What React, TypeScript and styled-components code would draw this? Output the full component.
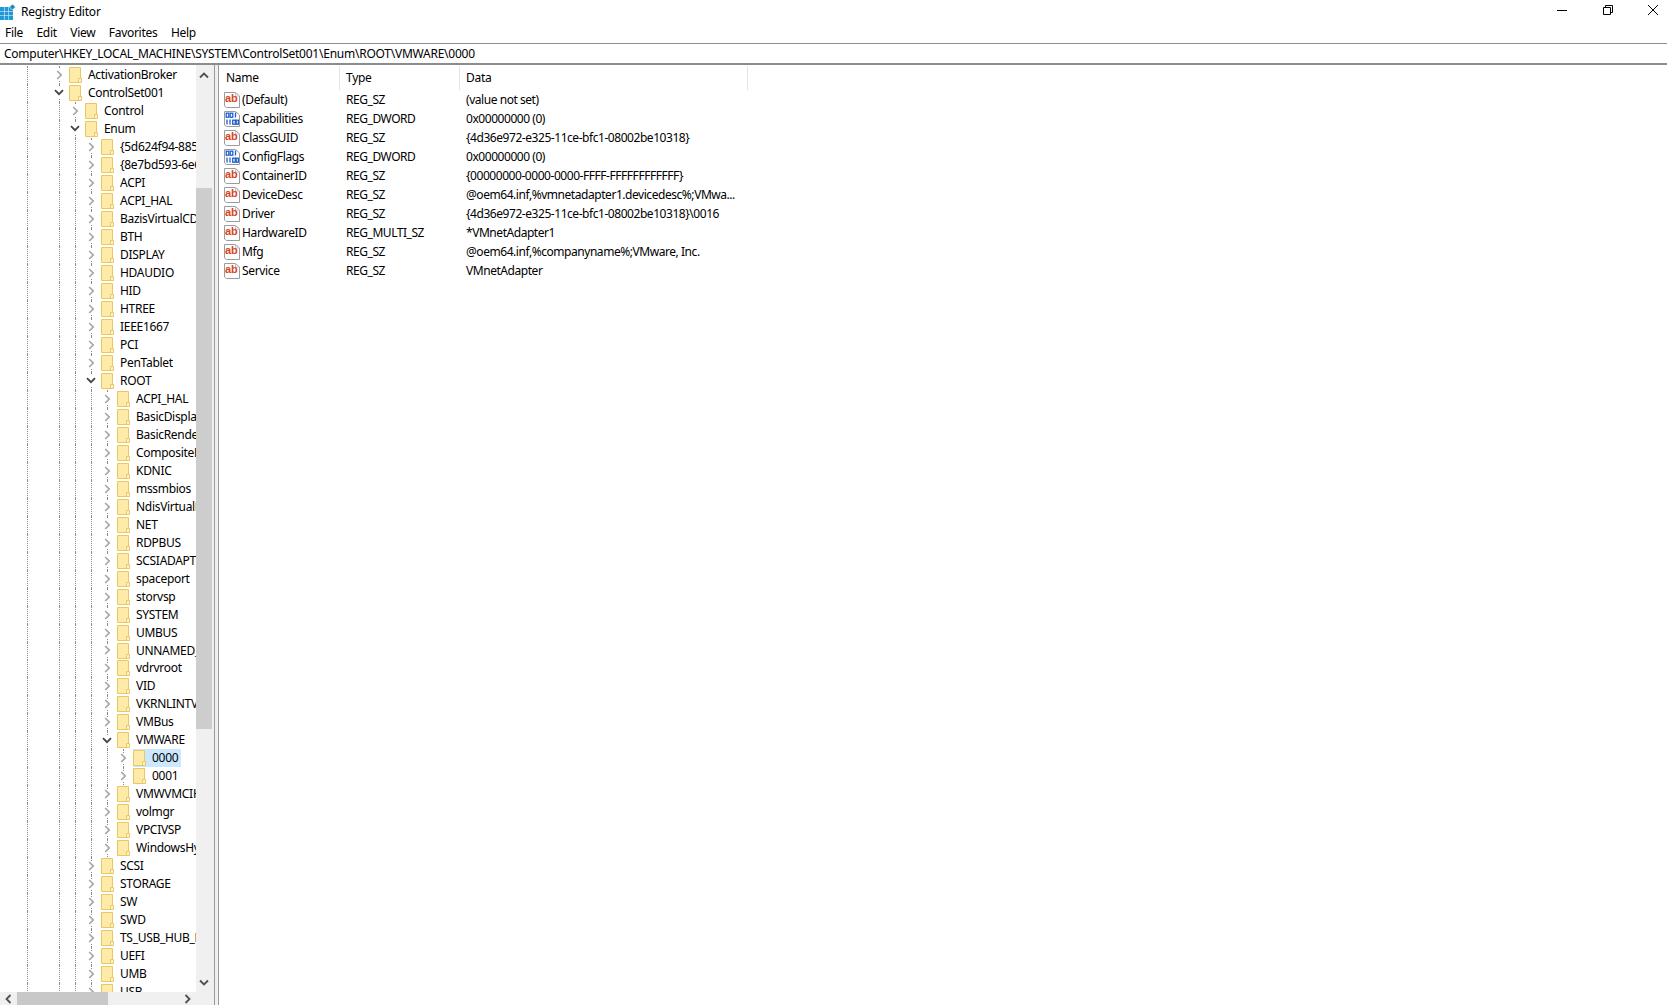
import React from "react";
import styled, { createGlobalStyle } from "styled-components";

const Global = createGlobalStyle`
  html, body { margin: 0; padding: 0; height: 100%; overflow: hidden; background: #f0f0f0; }
  #root { height: 100%; }
`;

const Window = styled.div`
  width: 1667px;
  height: 1005px;
  display: flex;
  flex-direction: column;
  overflow: hidden;
  background: #f0f0f0;
  color: #000;
  font-family: "Noto Sans", "Open Sans", sans-serif;
  font-size: 12px;
  line-height: 18px;
  letter-spacing: -0.3px;
`;

const TitleBar = styled.div`
  height: 22px;
  background: #fff;
  display: flex;
  align-items: center;
  flex: none;
`;
const TitleIcon = styled.svg`
  width: 16px;
  height: 18px;
  flex: none;
  margin-top: 2px;
`;
const TitleText = styled.span`
  margin-left: 5px;
  margin-top: 2px;
  letter-spacing: -0.2px;
`;
const WindowButtons = styled.div`
  margin-left: auto;
  display: flex;
  gap: 31px;
  padding-right: 7px;
  align-self: flex-start;
  padding-top: 4px;
`;
const WindowIcon = styled.svg`
  width: 14px;
  height: 12px;
  display: block;
`;

const MenuBar = styled.div`
  height: 21px;
  background: #fff;
  display: flex;
  align-items: center;
  padding-left: 5px;
  gap: 13.5px;
  flex: none;
`;
const MenuItem = styled.span``;

const AddressBar = styled.div`
  height: 19px;
  flex: none;
  background: #fff;
  border-top: 1px solid #8c8c8c;
  border-bottom: 2px solid #8c8c8c;
  padding-left: 4px;
  display: flex;
  align-items: center;
  letter-spacing: -0.24px;
`;

const Panes = styled.div`
  flex: 1;
  min-height: 0;
  display: flex;
`;

const TreePane = styled.div`
  width: 214px;
  flex: none;
  display: flex;
  flex-direction: column;
  position: relative;
  border-right: 1px solid #9a9a9a;
`;
const TreeTop = styled.div`
  flex: 1;
  min-height: 0;
  display: flex;
`;
const TreeView = styled.div`
  width: 196px;
  flex: none;
  background: #fff;
  overflow: hidden;
  padding-top: 1px;
`;
const VScroll = styled.div`
  width: 16px;
  flex: none;
  display: flex;
  flex-direction: column;
  align-items: center;
  background: #f0f0f0;
  height: 100%;
`;
const ArrowBox = styled.div<{ $h: number }>`
  height: ${(p) => p.$h}px;
  flex: none;
  display: flex;
  align-items: center;
  justify-content: center;
  width: 100%;
`;
const VTrack = styled.div`
  flex: 1;
  width: 100%;
  min-height: 0;
  display: flex;
  flex-direction: column;
`;
const VThumb = styled.div`
  margin-top: 103px;
  height: 541px;
  width: 100%;
  background: #cdcdcd;
`;
const HScroll = styled.div`
  height: 13px;
  width: 196px;
  flex: none;
  display: flex;
  align-items: center;
  background: #f0f0f0;
`;
const HArrow = styled.div`
  width: 17px;
  flex: none;
  display: flex;
  justify-content: center;
`;
const HTrack = styled.div`
  flex: 1;
  height: 100%;
`;
const HThumb = styled.div`
  width: 91px;
  height: 100%;
  background: #c8c8c8;
`;

const Row = styled.div<{ $level: number }>`
  position: relative;
  height: 17.99px;
  display: flex;
  align-items: center;
  padding-left: ${(p) => 54 + (p.$level - 1) * 16}px;
  white-space: nowrap;
`;
const Guide = styled.i<{ $x: number }>`
  position: absolute;
  left: ${(p) => p.$x}px;
  top: 0;
  height: 18px;
  border-left: 1px dotted #8a8a8a;
`;
const Twisty = styled.span`
  width: 15px;
  height: 11px;
  flex: none;
  position: relative;
  z-index: 1;
  display: flex;
  justify-content: flex-start;
`;
const TwistyBack = styled.span`
  background: #fff;
  display: flex;
  align-items: center;
  justify-content: center;
  width: 10px;
  height: 11px;
`;
const Node = styled.span<{ $selected?: boolean }>`
  display: flex;
  align-items: center;
  height: 18px;
  position: relative;
  z-index: 1;
  padding: 0 3px 0 0;
  background: ${(p) => (p.$selected ? "#cce8ff" : "transparent")};
`;
const Folder = styled.svg`
  width: 13px;
  height: 16px;
  margin: 0 6px 0 0;
  flex: none;
`;

const Splitter = styled.div`
  width: 3px;
  flex: none;
  border-right: 1px solid #9a9a9a;
`;

const ListPane = styled.div`
  flex: 1;
  background: #fff;
  min-width: 0;
  padding-top: 1px;
`;
const HeaderRow = styled.div`
  height: 24px;
  display: flex;
  align-items: center;
`;
const HeaderCell = styled.div<{ $w: number }>`
  width: ${(p) => p.$w}px;
  height: 100%;
  flex: none;
  box-sizing: border-box;
  padding-left: 6px;
  display: flex;
  align-items: center;
  border-right: 1px solid #e5e5e5;
  &:first-child {
    padding-left: 7px;
  }
`;
const ValueRow = styled.div`
  height: 19px;
  display: flex;
  align-items: center;
  white-space: nowrap;
`;
const ValueName = styled.div`
  width: 121px;
  flex: none;
  display: flex;
  align-items: center;
  padding-left: 5px;
  box-sizing: border-box;
  letter-spacing: -0.35px;
`;
const ValueCell = styled.div<{ $w: number; $sp: number }>`
  width: ${(p) => p.$w}px;
  flex: none;
  padding-left: 6px;
  box-sizing: border-box;
  letter-spacing: ${(p) => p.$sp}px;
`;
const RegIcon = styled.svg`
  width: 16px;
  height: 16px;
  margin-right: 2px;
  flex: none;
`;

const Chevron = ({ open }: { open: boolean }) =>
  open ? (
    <svg width="10" height="7" viewBox="0 0 10 7">
      <path d="M1 1.2 5 5.2 9 1.2" fill="none" stroke="#404040" strokeWidth="1.7" />
    </svg>
  ) : (
    <svg width="7" height="10" viewBox="0 0 7 10">
      <path d="M1.2 1 5.2 5 1.2 9" fill="none" stroke="#a6a6a6" strokeWidth="1.7" />
    </svg>
  );

const FolderIcon = () => (
  <Folder viewBox="0 0 13 16">
    <path d="M.5.5H11.5V15.5H.5Z" fill="#ffe9a3" stroke="#eac664" />
    <path d="M1 1H11V11H9.5V15H1Z" fill="#ffeba8" />
    <path d="M9.5 15.5V11.5H12.5V15.5Z" fill="#fff3c4" stroke="#eac664" />
  </Folder>
);

const StringIcon = () => (
  <RegIcon viewBox="0 0 16 16">
    <path d="M.5 .5H11.5L15.5 4V15.5H2.5L.5 14Z" fill="#fff" stroke="#9c9c9c" />
    <path d="M11.5 .5V4H15.5" fill="none" stroke="#c4c4c4" />
    <text x="1" y="10" fontFamily="'Liberation Sans', sans-serif" fontWeight="700" fontSize="11" letterSpacing="0" fill="#d8431d">
      ab
    </text>
  </RegIcon>
);

const BinaryIcon = () => (
  <RegIcon viewBox="0 0 16 16">
    <path d="M.5 .5H11.5L15.5 4V15.5H2.5L.5 14Z" fill="#fff" stroke="#9c9c9c" />
    <g fill="none" stroke="#1f5fd0" strokeWidth="1.3">
      <rect x="2.2" y="2.2" width="2.6" height="4" />
      <rect x="6.2" y="2.2" width="2.6" height="4" />
      <path d="M11.5 1.5V6.5M6 8.5V13.5M3 8.5V13.5" />
      <rect x="8.7" y="9.2" width="2.6" height="4" />
      <rect x="12.2" y="9.2" width="2.2" height="4" />
    </g>
  </RegIcon>
);

type TreeNode = { n: string; l: number; open?: boolean; sel?: boolean };
const l = (level: number, names: string[]): TreeNode[] => names.map((n) => ({ n, l: level }));

const tree: TreeNode[] = [
  { n: "ActivationBroker", l: 1 },
  { n: "ControlSet001", l: 1, open: true },
  { n: "Control", l: 2 },
  { n: "Enum", l: 2, open: true },
  ...l(3, [
    "{5d624f94-8850-40c3-a3fa-a4fd2080baf3}",
    "{8e7bd593-6e6c-4c52-86a6-77175494dd8e}",
    "ACPI",
    "ACPI_HAL",
    "BazisVirtualCDBus",
    "BTH",
    "DISPLAY",
    "HDAUDIO",
    "HID",
    "HTREE",
    "IEEE1667",
    "PCI",
    "PenTablet",
  ]),
  { n: "ROOT", l: 3, open: true },
  ...l(4, [
    "ACPI_HAL",
    "BasicDisplay",
    "BasicRender",
    "CompositeBus",
    "KDNIC",
    "mssmbios",
    "NdisVirtualBus",
    "NET",
    "RDPBUS",
    "SCSIADAPTER",
    "spaceport",
    "storvsp",
    "SYSTEM",
    "UMBUS",
    "UNNAMED_BUS",
    "vdrvroot",
    "VID",
    "VKRNLINTVSP",
    "VMBus",
  ]),
  { n: "VMWARE", l: 4, open: true },
  { n: "0000", l: 5, sel: true },
  { n: "0001", l: 5 },
  ...l(4, ["VMWVMCIHOSTDEV", "volmgr", "VPCIVSP", "WindowsHyperVisor"]),
  ...l(3, ["SCSI", "STORAGE", "SW", "SWD", "TS_USB_HUB_ENUM", "UEFI", "UMB", "USB"]),
];

const guideXs = [27, 59, 75, 91, 107, 123];

const values: { name: string; type: string; data: string; bin?: boolean }[] = [
  { name: "(Default)", type: "REG_SZ", data: "(value not set)" },
  { name: "Capabilities", type: "REG_DWORD", data: "0x00000000 (0)", bin: true },
  { name: "ClassGUID", type: "REG_SZ", data: "{4d36e972-e325-11ce-bfc1-08002be10318}" },
  { name: "ConfigFlags", type: "REG_DWORD", data: "0x00000000 (0)", bin: true },
  { name: "ContainerID", type: "REG_SZ", data: "{00000000-0000-0000-FFFF-FFFFFFFFFFFF}" },
  { name: "DeviceDesc", type: "REG_SZ", data: "@oem64.inf,%vmnetadapter1.devicedesc%;VMwa..." },
  { name: "Driver", type: "REG_SZ", data: "{4d36e972-e325-11ce-bfc1-08002be10318}\\0016" },
  { name: "HardwareID", type: "REG_MULTI_SZ", data: "*VMnetAdapter1" },
  { name: "Mfg", type: "REG_SZ", data: "@oem64.inf,%companyname%;VMware, Inc." },
  { name: "Service", type: "REG_SZ", data: "VMnetAdapter" },
];

export default function App() {
  return (
    <Window>
      <Global />
      <TitleBar>
        <TitleIcon viewBox="0 0 16 18">
          <g fill="#1f9ad6">
            {[4, 8.5, 13].map((y) =>
              [0, 4.5, 9].map((x) => <rect key={`${x}-${y}`} x={x} y={y} width="4" height="4" />)
            )}
          </g>
          <path d="M12.5 1 15.5 4 12.5 7 9.5 4Z" fill="#1c86c8" stroke="#fff" strokeWidth=".6" />
        </TitleIcon>
        <TitleText>Registry Editor</TitleText>
        <WindowButtons>
          <WindowIcon viewBox="0 0 14 12">
            <path d="M1 6.5H11" stroke="#000" strokeWidth="1" />
          </WindowIcon>
          <WindowIcon viewBox="0 0 14 12">
            <path d="M2.5 3.5H9.5V10.5H2.5ZM4.5 3.5V1.5H11.5V8.5H9.5" fill="none" stroke="#000" />
          </WindowIcon>
          <WindowIcon viewBox="0 0 14 12">
            <path d="M2 1 12 11M12 1 2 11" stroke="#000" strokeWidth="1" />
          </WindowIcon>
        </WindowButtons>
      </TitleBar>
      <MenuBar>
        <MenuItem>File</MenuItem>
        <MenuItem>Edit</MenuItem>
        <MenuItem>View</MenuItem>
        <MenuItem>Favorites</MenuItem>
        <MenuItem>Help</MenuItem>
      </MenuBar>
      <AddressBar>Computer\HKEY_LOCAL_MACHINE\SYSTEM\ControlSet001\Enum\ROOT\VMWARE\0000</AddressBar>
      <Panes>
        <TreePane>
          <TreeTop>
            <TreeView>
              {tree.map((r, i) => (
                <Row key={i} $level={r.l}>
                  {guideXs.slice(0, r.l + 1).map((x) => (
                    <Guide key={x} $x={x} />
                  ))}
                  <Twisty>
                    <TwistyBack>
                      <Chevron open={!!r.open} />
                    </TwistyBack>
                  </Twisty>
                  <Node $selected={r.sel}>
                    <FolderIcon />
                    {r.n}
                  </Node>
                </Row>
              ))}
            </TreeView>
            <VScroll>
              <ArrowBox $h={20}>
                <svg width="10" height="7" viewBox="0 0 10 7">
                  <path d="M1 5.5 5 1.5 9 5.5" fill="none" stroke="#505050" strokeWidth="1.8" />
                </svg>
              </ArrowBox>
              <VTrack>
                <VThumb />
              </VTrack>
              <ArrowBox $h={20}>
                <svg width="10" height="7" viewBox="0 0 10 7">
                  <path d="M1 1.5 5 5.5 9 1.5" fill="none" stroke="#505050" strokeWidth="1.8" />
                </svg>
              </ArrowBox>
            </VScroll>
          </TreeTop>
          <HScroll>
            <HArrow>
              <svg width="7" height="10" viewBox="0 0 7 10">
                <path d="M5.5 1 1.5 5 5.5 9" fill="none" stroke="#505050" strokeWidth="1.8" />
              </svg>
            </HArrow>
            <HTrack>
              <HThumb />
            </HTrack>
            <HArrow>
              <svg width="7" height="10" viewBox="0 0 7 10">
                <path d="M1.5 1 5.5 5 1.5 9" fill="none" stroke="#505050" strokeWidth="1.8" />
              </svg>
            </HArrow>
          </HScroll>
        </TreePane>
        <Splitter />
        <ListPane>
          <HeaderRow>
            <HeaderCell $w={121}>Name</HeaderCell>
            <HeaderCell $w={120}>Type</HeaderCell>
            <HeaderCell $w={288}>Data</HeaderCell>
          </HeaderRow>
          {values.map((v) => (
            <ValueRow key={v.name}>
              <ValueName>
                {v.bin ? <BinaryIcon /> : <StringIcon />}
                {v.name}
              </ValueName>
              <ValueCell $w={120} $sp={-0.45}>
                {v.type}
              </ValueCell>
              <ValueCell $w={288} $sp={-0.45}>
                {v.data}
              </ValueCell>
            </ValueRow>
          ))}
        </ListPane>
      </Panes>
    </Window>
  );
}
